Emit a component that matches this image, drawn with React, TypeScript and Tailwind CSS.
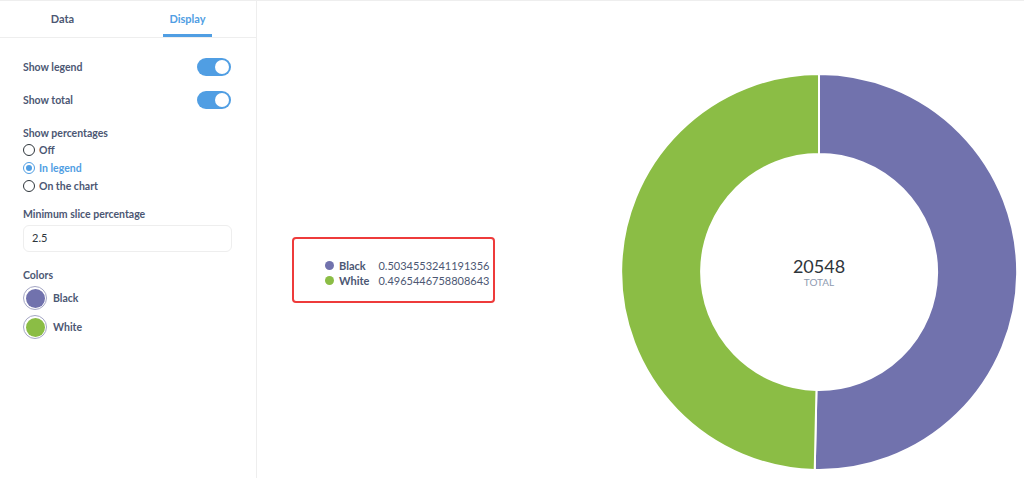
import React from 'react'

const font = { fontFamily: 'Lato, "Noto Sans", sans-serif' }

const Toggle = () => (
  <div className="w-[34px] h-[18px] rounded-full bg-[#509ee3] flex items-center justify-end pr-[2px]">
    <div className="w-[14px] h-[14px] rounded-full bg-white" />
  </div>
)

const Radio = ({ label, checked }: { label: string; checked?: boolean }) => (
  <div className="h-[18px] flex items-center gap-[4px]">
    {checked ? (
      <div className="w-[12px] h-[12px] rounded-full border-[1.5px] border-[#509ee3] flex items-center justify-center">
        <div className="w-[6px] h-[6px] rounded-full bg-[#509ee3]" />
      </div>
    ) : (
      <div className="w-[12px] h-[12px] rounded-full border-[1.5px] border-[#2e353b]" />
    )}
    <span className={`text-[10.5px] font-bold pt-[1px] ${checked ? 'text-[#509ee3]' : 'text-[#4c5773]'}`}>{label}</span>
  </div>
)

const Swatch = ({ color, label }: { color: string; label: string }) => (
  <div className="flex items-center gap-[6px]">
    <div className="w-[24px] h-[24px] rounded-full border border-[#a4a6c4] flex items-center justify-center">
      <div className="w-[19px] h-[19px] rounded-full" style={{ backgroundColor: color }} />
    </div>
    <span className="text-[10.5px] font-bold text-[#4c5773] pt-[1px]">{label}</span>
  </div>
)

const Donut = () => (
  <svg width="396" height="396" viewBox="0 0 396 396">
    <path
      d="M198,0 A198,198 0 1 1 193.72,395.95 L195.45,315.97 A118,118 0 1 0 198,80 Z"
      fill="#7172ad"
      stroke="#ffffff"
      strokeWidth="2"
    />
    <path
      d="M193.72,395.95 A198,198 0 0 1 198,0 L198,80 A118,118 0 0 0 195.45,315.97 Z"
      fill="#8bbd45"
      stroke="#ffffff"
      strokeWidth="2"
    />
  </svg>
)

export default function App() {
  return (
    <div className="relative w-[1024px] h-[478px] bg-white border-t border-[#eeeeee] flex overflow-hidden" style={font}>
      {/* Sidebar */}
      <div className="w-[257px] h-full border-r border-[#eeeeee] flex flex-col shrink-0">
        <div className="h-[37px] border-b border-[#eeeeee] grid grid-cols-2 pr-[6px]">
          <div className="flex items-center justify-center text-[11px] font-bold text-[#4c5773]">Data</div>
          <div className="flex items-center justify-center">
            <div className="h-full flex items-center border-b-[3px] border-[#509ee3] pt-[3px] px-[6px] text-[11px] font-bold text-[#509ee3]">
              Display
            </div>
          </div>
        </div>

        <div className="pl-[23px] pr-[25px] flex flex-col">
          <div className="mt-[20px] h-[18px] flex items-center justify-between">
            <span className="text-[10.5px] font-bold text-[#4c5773] pt-[2px]">Show legend</span>
            <Toggle />
          </div>
          <div className="mt-[15px] h-[18px] flex items-center justify-between">
            <span className="text-[10.5px] font-bold text-[#4c5773] pt-[2px]">Show total</span>
            <Toggle />
          </div>

          <div className="mt-[17px] leading-[14px] text-[10.5px] font-bold text-[#4c5773]">Show percentages</div>
          <div className="mt-[1px] flex flex-col">
            <Radio label="Off" />
            <Radio label="In legend" checked />
            <Radio label="On the chart" />
          </div>

          <div className="mt-[12px] leading-[14px] text-[10.5px] font-bold text-[#4c5773]">Minimum slice percentage</div>
          <div className="mt-[4px] h-[27px] w-[209px] rounded-[6px] border border-[#eeeeee] flex items-center pl-[8px] text-[11px] text-[#2e353b]">
            2.5
          </div>

          <div className="mt-[16px] leading-[14px] text-[10.5px] font-bold text-[#4c5773]">Colors</div>
          <div className="mt-[4px] flex flex-col gap-[5px]">
            <Swatch color="#7172ad" label="Black" />
            <Swatch color="#8bbd45" label="White" />
          </div>
        </div>
      </div>

      {/* Chart area */}
      <div className="flex-1 h-full pt-[73px] flex items-start">
        <div className="mt-[163px] ml-[35px] w-[203px] h-[66px] border-2 border-[#ee3b3b] rounded-[4px] pt-[19px] pl-[31px]">
          <div className="grid grid-cols-[auto_auto] justify-start gap-x-[9px] text-[11px] leading-[15px] text-[#4c5773]">
            <div className="flex items-center gap-[5px] font-bold">
              <span className="w-[9px] h-[9px] rounded-full bg-[#7172ad]" />
              Black
            </div>
            <div>0.5034553241191356</div>
            <div className="flex items-center gap-[5px] font-bold">
              <span className="w-[9px] h-[9px] rounded-full bg-[#8bbd45]" />
              White
            </div>
            <div>0.4965446758808643</div>
          </div>
        </div>

        <div className="ml-[126px] relative w-[396px] h-[396px]">
          <Donut />
          <div className="absolute inset-0 flex flex-col items-center justify-center">
            <div className="text-[18px] leading-[20px] text-[#2e353b]">20548</div>
            <div className="text-[10px] leading-[12px] text-[#8e9bb0]">TOTAL</div>
          </div>
        </div>
      </div>
    </div>
  )
}
